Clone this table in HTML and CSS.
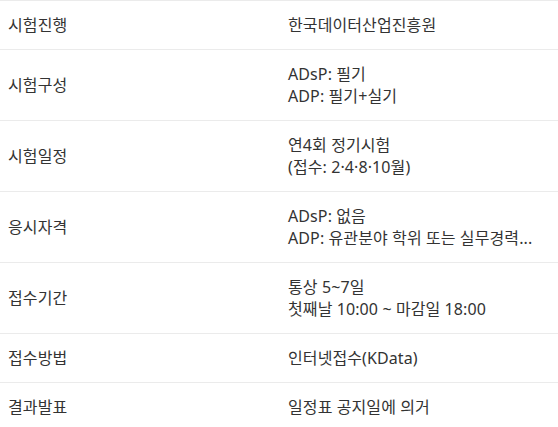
FILE: index.html
```html
<!DOCTYPE html>
<html lang="ko">
<head>
<meta charset="utf-8">
<link rel="stylesheet" href="styles.css">
</head>
<body>
<table class="info">
  <tbody>
    <tr><th>시험진행</th><td>한국데이터산업진흥원</td></tr>
    <tr><th>시험구성</th><td>ADsP: 필기<br>ADP: 필기+실기</td></tr>
    <tr><th>시험일정</th><td>연4회 정기시험<br>(접수: 2·4·8·10월)</td></tr>
    <tr><th>응시자격</th><td>ADsP: 없음<br>ADP: 유관분야 학위 또는 실무경력...</td></tr>
    <tr><th>접수기간</th><td>통상 5~7일<br>첫째날 10:00 ~ 마감일 18:00</td></tr>
    <tr><th>접수방법</th><td>인터넷접수(KData)</td></tr>
    <tr><th>결과발표</th><td>일정표 공지일에 의거</td></tr>
  </tbody>
</table>
</body>
</html>
```
FILE: styles.css
```css
html, body {
  margin: 0;
  padding: 0;
  background: #fff;
}
body {
  font-family: "Noto Sans", "Noto Sans CJK KR", sans-serif;
  font-size: 16px;
  color: #333;
}
.info {
  width: 100%;
  border-collapse: collapse;
  table-layout: fixed;
}
.info th,
.info td {
  border-top: 1px solid #ebebeb;
  padding: 13px 8px;
  line-height: 22px;
  text-align: left;
  vertical-align: middle;
  font-weight: normal;
  white-space: nowrap;
  letter-spacing: 0.1px;
}
.info th {
  width: 264px;
}
```
